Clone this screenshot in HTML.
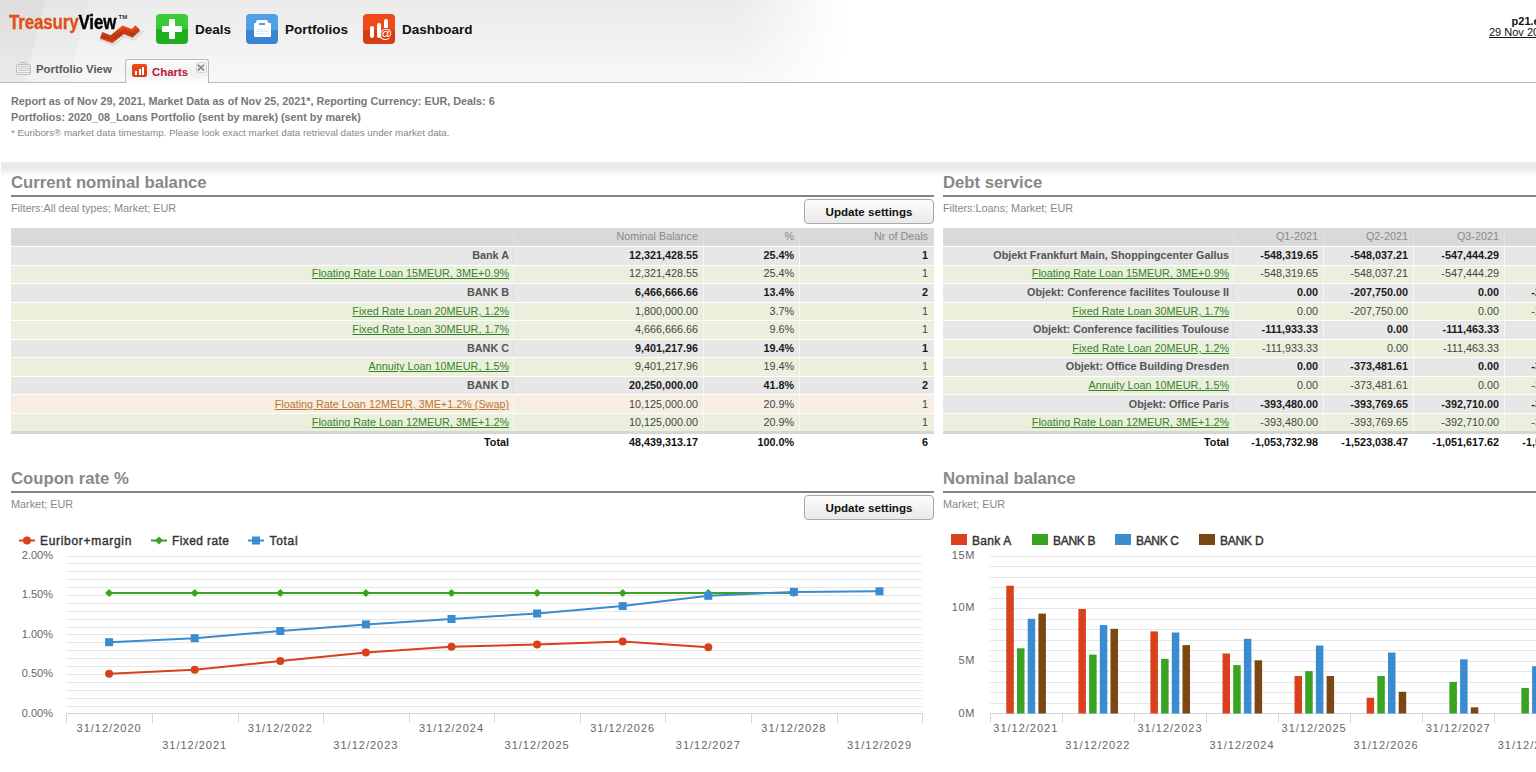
<!DOCTYPE html><html><head><meta charset="utf-8"><title>TreasuryView Charts</title><style>
*{margin:0;padding:0;box-sizing:border-box}
html,body{width:1536px;height:772px;overflow:hidden;background:#fff}
body{position:relative;font-family:"Liberation Sans",sans-serif;color:#333}
.a{position:absolute;white-space:nowrap}
#hdr{position:absolute;left:0;top:0;width:1536px;height:83px;background:#fff;overflow:hidden}
#hdrbg{position:absolute;left:0;top:0;width:900px;height:83px;
 background:linear-gradient(104deg,rgba(0,0,0,0.055) 0,rgba(0,0,0,0.055) 44px,rgba(0,0,0,0.025) 44px,rgba(0,0,0,0.025) 87px,rgba(0,0,0,0) 87px),linear-gradient(to bottom,#ebebeb 0%,#f1f1f1 50%,#f8f8f8 100%);
 -webkit-mask-image:linear-gradient(to right,#000 0%,#000 82%,rgba(0,0,0,0) 94%)}
#hdrline{position:absolute;left:0;top:82px;width:1536px;height:1px;background:#b9b9b9}
.nav{font-weight:bold;font-size:13.5px;color:#111;line-height:16px}
.ico{position:absolute;border-radius:4px;overflow:hidden}
.h2{font-size:16.7px;font-weight:bold;color:#888;line-height:20px}
.rule{position:absolute;height:2px;background:#838383}
.sub{font-size:10.85px;color:#888;line-height:13px}
.btn{position:absolute;border:1px solid #a9a9a9;border-radius:4px;background:linear-gradient(#fdfdfd,#e9e9e9);font-weight:bold;font-size:11.6px;color:#111;text-align:center}
table.t{position:absolute;border-collapse:collapse;table-layout:fixed;font-size:10.7px}
.t td{height:18.63px;padding:0 5px 0 0;text-align:right;border-bottom:1px solid #fff;border-right:1px solid #fff;line-height:12px;overflow:hidden;white-space:nowrap}
.t tr.hd td{background:#d9d9d9;color:#888;height:19px;border-right-color:#e2e2e2}
.t tr.g td{background:#e6e7e6;color:#222;font-weight:bold;border-right-color:#e6e7e6}
.t tr.g td.l{color:#555;border-right-color:#d6d6d6}
.t tr.l td{background:#ebf0dd;color:#444}
.t tr.s td{background:#f6eee3;color:#444}
.t tr.l td.l a{color:#3b8a2a;text-decoration:underline}
.t tr.s td.l a{color:#c07a2a;text-decoration:underline}
.t tr.tot td{background:#fff;color:#111;font-weight:bold;border-top:2px solid #d5d5d5;border-right-color:#fff}
.tc{text-align:right;font-size:10.8px;line-height:13px;overflow:visible}
.hdt{color:#8a8a8a;font-weight:normal}
.glab{color:#555;font-weight:bold}
.llab u{text-decoration:underline}
.gnum{color:#1a1a1a;font-weight:bold}
.lnum{color:#444}
.cl{font-size:11px;color:#666;line-height:13px}
.xl{font-size:11px;color:#666;letter-spacing:1px;line-height:13px}
.lg{font-size:12px;font-weight:normal;color:#333;line-height:14px;-webkit-text-stroke:0.4px #333}
</style></head><body>
<div id="hdr"><div id="hdrbg"></div>
<div class="a" style="left:9.3px;top:10.2px;font-size:20.3px;font-weight:bold;line-height:24px;transform:scaleX(0.83);transform-origin:0 0;letter-spacing:-0.1px;-webkit-text-stroke:0.45px"><span style="color:#e2501c;-webkit-text-stroke-color:#e2501c">Treasury</span><span style="color:#000;-webkit-text-stroke-color:#000">View</span></div>
<svg class="a" style="left:0;top:0" width="150" height="50" viewBox="0 0 150 50"><defs><linearGradient id="sw" x1="0" y1="0" x2="0" y2="1"><stop offset="0" stop-color="#f24e1c"/><stop offset="0.55" stop-color="#c23a16"/><stop offset="1" stop-color="#e4461a"/></linearGradient></defs><polygon points="101,40 113.4,45 125,36 133.7,39.8 142,32" fill="none" stroke="#cfcfcf" stroke-width="2" opacity="0.6"/><polygon points="102.3,32 110.6,35.2 122.6,25.6 131.6,28.9 135.6,25.3 140.3,30.5 132.7,37.8 124,34.1 112.4,43.2 99.9,38.5" fill="url(#sw)"/><path d="M101.5 36 L112 40 L123.5 30.5 L132.5 34 L138.5 28.5" fill="none" stroke="#8f2a10" stroke-width="2.2" opacity="0.35"/><text x="118.5" y="19" font-size="6" font-weight="bold" fill="#333" font-family="Liberation Sans">TM</text></svg>
<div class="ico" style="left:156px;top:14px;width:32px;height:30px;background:linear-gradient(#3bcc35 0%,#3bcc35 50%,#1fb01f 50%,#1fb01f 100%)"><div style="position:absolute;left:13px;top:5px;width:6px;height:20px;background:#fff;border-radius:1px"></div><div style="position:absolute;left:6px;top:12px;width:20px;height:6px;background:#fff;border-radius:1px"></div></div>
<div class="a nav" style="left:195px;top:22px">Deals</div>
<div class="ico" style="left:246px;top:14px;width:32px;height:30px;background:linear-gradient(#4f9ee8 0%,#4f9ee8 52%,#3a85d2 52%,#3a85d2 100%)"><div style="position:absolute;left:10px;top:6px;width:12px;height:6px;background:#fff;border-radius:2px 2px 0 0"></div><div style="position:absolute;left:13px;top:9px;width:6px;height:3px;background:#4f9ee8"></div><div style="position:absolute;left:8px;top:9px;width:17px;height:14px;background:#fff;border-radius:1px"></div><div style="position:absolute;left:13px;top:9px;width:6px;height:2px;background:#4f9ee8"></div><div style="position:absolute;left:10px;top:15px;width:12px;height:1px;background:#dde8f4"></div><div style="position:absolute;left:10px;top:17px;width:12px;height:1px;background:#dde8f4"></div><div style="position:absolute;left:10px;top:19px;width:12px;height:1px;background:#dde8f4"></div></div>
<div class="a nav" style="left:285px;top:22px">Portfolios</div>
<div class="ico" style="left:363px;top:14px;width:32px;height:30px;background:linear-gradient(#ee4a1c 0%,#ee4a1c 52%,#d63c16 52%,#d63c16 100%)"><div style="position:absolute;left:6.5px;top:12px;width:4.5px;height:11.5px;background:#fff;border-radius:2.5px"></div><div style="position:absolute;left:13.5px;top:8.5px;width:4.5px;height:15px;background:#fff;border-radius:2.5px"></div><div style="position:absolute;left:20.5px;top:5px;width:4.5px;height:8.5px;background:#fff;border-radius:2.5px 2.5px 0 0"></div><div style="position:absolute;left:16px;top:13px;font-size:13px;line-height:14px;color:#fff;font-family:'Liberation Sans'">@</div></div>
<div class="a nav" style="left:402px;top:22px">Dashboard</div>
<div class="a" style="left:1511.6px;top:14.7px;font-size:11px;font-weight:bold;color:#111;line-height:13px">p21.eu</div>
<div class="a" style="left:1489px;top:26px;font-size:11px;color:#111;line-height:13px;text-decoration:underline">29 Nov 2021</div>
<div class="a" style="left:20px;top:62px;width:7px;height:3px;border:1.5px solid #bdbdbd;border-bottom:none;border-radius:2px 2px 0 0"></div>
<div class="a" style="left:16px;top:64px;width:15px;height:11px;border:1.5px solid #bdbdbd;border-radius:2px;background:repeating-linear-gradient(#f2f2f2 0,#f2f2f2 1px,#c9c9c9 1px,#c9c9c9 2px);box-shadow:inset 1px 0 0 #f5f5f5"></div>
<div class="a" style="left:36px;top:63px;font-size:11.4px;font-weight:bold;color:#5a5a5a;line-height:13px">Portfolio View</div>
<div class="a" style="left:125px;top:59px;width:84px;height:25px;border:1px solid #b9b9b9;border-bottom:none;border-radius:3px 3px 0 0;background:linear-gradient(#fbfbfb,#f0f0f0 60%,#fff)"></div>
<div class="a" style="left:132px;top:64px;width:15px;height:13px;border-radius:2px;background:linear-gradient(#ee4a1c,#d63c16)"><div style="position:absolute;left:3px;top:7px;width:2px;height:4px;background:#fff"></div><div style="position:absolute;left:6.5px;top:5px;width:2px;height:6px;background:#fff"></div><div style="position:absolute;left:10px;top:2.5px;width:2px;height:8.5px;background:#fff"></div></div>
<div class="a" style="left:152px;top:65.5px;font-size:11.4px;font-weight:bold;color:#b8203a;line-height:13px">Charts</div>
<div class="a" style="left:195.5px;top:62px;width:11px;height:10.5px;border:1px solid #d0d0d0;border-radius:2.5px;background:#f3f3f3"></div>
<svg class="a" style="left:195px;top:62px" width="12" height="11"><path d="M3.2 3.2 L8.6 8 M8.6 3.2 L3.2 8" stroke="#8a8a8a" stroke-width="1.7" stroke-linecap="round"/></svg>
<div id="hdrline"></div><div class="a" style="left:126px;top:82px;width:82px;height:1px;background:#f6f6f6"></div>
</div>
<div class="a" style="left:11px;top:95px;font-size:10.8px;font-weight:bold;color:#777;line-height:13px">Report as of Nov 29, 2021, Market Data as of Nov 25, 2021*, Reporting Currency: EUR, Deals: 6</div>
<div class="a" style="left:11px;top:111px;font-size:10.8px;font-weight:bold;color:#777;line-height:13px">Portfolios: 2020_08_Loans Portfolio (sent by marek) (sent by marek)</div>
<div class="a" style="left:11px;top:126.5px;font-size:9.8px;color:#888;line-height:12px">* Euribors&#174; market data timestamp. Please look exact market data retrieval dates under market data.</div>
<div class="a" style="left:1px;top:161.5px;width:1535px;height:15px;background:linear-gradient(#ebebeb 0%,#e8e8e8 35%,rgba(255,255,255,0) 100%)"></div>
<div class="a h2" style="left:11px;top:172.8px">Current nominal balance</div>
<div class="rule" style="left:11px;top:195px;width:923px"></div>
<div class="a sub" style="left:11px;top:202px">Filters:All deal types; Market; EUR</div>
<div class="btn" style="left:804px;top:199px;width:130px;height:25px;line-height:23px">Update settings</div>
<div class="a h2" style="left:943px;top:172.8px">Debt service</div>
<div class="rule" style="left:943px;top:195px;width:600px"></div>
<div class="a sub" style="left:943px;top:202px">Filters:Loans; Market; EUR</div>
<div class="a h2" style="left:11px;top:468.8px">Coupon rate %</div>
<div class="rule" style="left:11px;top:491px;width:923px"></div>
<div class="a sub" style="left:11px;top:498px">Market; EUR</div>
<div class="btn" style="left:804px;top:495px;width:130px;height:25px;line-height:23px">Update settings</div>
<div class="a h2" style="left:943px;top:468.8px">Nominal balance</div>
<div class="rule" style="left:943px;top:491px;width:600px"></div>
<div class="a sub" style="left:943px;top:498px">Market; EUR</div>
<div class="a" style="left:11px;top:228px;width:923px;height:18px;background:#d9d9d9"></div>
<div class="a" style="left:513px;top:228px;width:1px;height:18px;background:#e1e1e1"></div>
<div class="a" style="left:703px;top:228px;width:1px;height:18px;background:#e1e1e1"></div>
<div class="a" style="left:799px;top:228px;width:1px;height:18px;background:#e1e1e1"></div>
<div class="a tc hdt" style="left:514px;width:184px;top:230px">Nominal Balance</div>
<div class="a tc hdt" style="left:704px;width:90px;top:230px">%</div>
<div class="a tc hdt" style="left:800px;width:128px;top:230px">Nr of Deals</div>
<div class="a" style="left:11px;top:247.00px;width:923px;height:17.53px;background:#e6e7e6"></div>
<div class="a" style="left:513px;top:247.00px;width:1px;height:17.53px;background:#d9dad9"></div>
<div class="a" style="left:703px;top:247.00px;width:1px;height:17.53px;background:#f7f7f7"></div>
<div class="a" style="left:799px;top:247.00px;width:1px;height:17.53px;background:#f7f7f7"></div>
<div class="a tc glab" style="left:11px;width:498px;top:248.60px">Bank A</div>
<div class="a tc gnum" style="left:514px;width:184px;top:248.60px">12,321,428.55</div>
<div class="a tc gnum" style="left:704px;width:90px;top:248.60px">25.4%</div>
<div class="a tc gnum" style="left:800px;width:128px;top:248.60px">1</div>
<div class="a" style="left:11px;top:265.53px;width:923px;height:17.53px;background:#ebf0dd"></div>
<div class="a" style="left:513px;top:265.53px;width:1px;height:17.53px;background:#f7f7f7"></div>
<div class="a" style="left:703px;top:265.53px;width:1px;height:17.53px;background:#f7f7f7"></div>
<div class="a" style="left:799px;top:265.53px;width:1px;height:17.53px;background:#f7f7f7"></div>
<div class="a tc llab" style="left:11px;width:498px;top:267.24px;color:#37822d"><u>Floating Rate Loan 15MEUR, 3ME+0.9%</u></div>
<div class="a tc lnum" style="left:514px;width:184px;top:267.24px">12,321,428.55</div>
<div class="a tc lnum" style="left:704px;width:90px;top:267.24px">25.4%</div>
<div class="a tc lnum" style="left:800px;width:128px;top:267.24px">1</div>
<div class="a" style="left:11px;top:284.06px;width:923px;height:17.53px;background:#e6e7e6"></div>
<div class="a" style="left:513px;top:284.06px;width:1px;height:17.53px;background:#d9dad9"></div>
<div class="a" style="left:703px;top:284.06px;width:1px;height:17.53px;background:#f7f7f7"></div>
<div class="a" style="left:799px;top:284.06px;width:1px;height:17.53px;background:#f7f7f7"></div>
<div class="a tc glab" style="left:11px;width:498px;top:285.88px">BANK B</div>
<div class="a tc gnum" style="left:514px;width:184px;top:285.88px">6,466,666.66</div>
<div class="a tc gnum" style="left:704px;width:90px;top:285.88px">13.4%</div>
<div class="a tc gnum" style="left:800px;width:128px;top:285.88px">2</div>
<div class="a" style="left:11px;top:302.59px;width:923px;height:17.53px;background:#ebf0dd"></div>
<div class="a" style="left:513px;top:302.59px;width:1px;height:17.53px;background:#f7f7f7"></div>
<div class="a" style="left:703px;top:302.59px;width:1px;height:17.53px;background:#f7f7f7"></div>
<div class="a" style="left:799px;top:302.59px;width:1px;height:17.53px;background:#f7f7f7"></div>
<div class="a tc llab" style="left:11px;width:498px;top:304.52px;color:#37822d"><u>Fixed Rate Loan 20MEUR, 1.2%</u></div>
<div class="a tc lnum" style="left:514px;width:184px;top:304.52px">1,800,000.00</div>
<div class="a tc lnum" style="left:704px;width:90px;top:304.52px">3.7%</div>
<div class="a tc lnum" style="left:800px;width:128px;top:304.52px">1</div>
<div class="a" style="left:11px;top:321.12px;width:923px;height:17.53px;background:#ebf0dd"></div>
<div class="a" style="left:513px;top:321.12px;width:1px;height:17.53px;background:#f7f7f7"></div>
<div class="a" style="left:703px;top:321.12px;width:1px;height:17.53px;background:#f7f7f7"></div>
<div class="a" style="left:799px;top:321.12px;width:1px;height:17.53px;background:#f7f7f7"></div>
<div class="a tc llab" style="left:11px;width:498px;top:323.16px;color:#37822d"><u>Fixed Rate Loan 30MEUR, 1.7%</u></div>
<div class="a tc lnum" style="left:514px;width:184px;top:323.16px">4,666,666.66</div>
<div class="a tc lnum" style="left:704px;width:90px;top:323.16px">9.6%</div>
<div class="a tc lnum" style="left:800px;width:128px;top:323.16px">1</div>
<div class="a" style="left:11px;top:339.65px;width:923px;height:17.53px;background:#e6e7e6"></div>
<div class="a" style="left:513px;top:339.65px;width:1px;height:17.53px;background:#d9dad9"></div>
<div class="a" style="left:703px;top:339.65px;width:1px;height:17.53px;background:#f7f7f7"></div>
<div class="a" style="left:799px;top:339.65px;width:1px;height:17.53px;background:#f7f7f7"></div>
<div class="a tc glab" style="left:11px;width:498px;top:341.80px">BANK C</div>
<div class="a tc gnum" style="left:514px;width:184px;top:341.80px">9,401,217.96</div>
<div class="a tc gnum" style="left:704px;width:90px;top:341.80px">19.4%</div>
<div class="a tc gnum" style="left:800px;width:128px;top:341.80px">1</div>
<div class="a" style="left:11px;top:358.18px;width:923px;height:17.53px;background:#ebf0dd"></div>
<div class="a" style="left:513px;top:358.18px;width:1px;height:17.53px;background:#f7f7f7"></div>
<div class="a" style="left:703px;top:358.18px;width:1px;height:17.53px;background:#f7f7f7"></div>
<div class="a" style="left:799px;top:358.18px;width:1px;height:17.53px;background:#f7f7f7"></div>
<div class="a tc llab" style="left:11px;width:498px;top:360.44px;color:#37822d"><u>Annuity Loan 10MEUR, 1.5%</u></div>
<div class="a tc lnum" style="left:514px;width:184px;top:360.44px">9,401,217.96</div>
<div class="a tc lnum" style="left:704px;width:90px;top:360.44px">19.4%</div>
<div class="a tc lnum" style="left:800px;width:128px;top:360.44px">1</div>
<div class="a" style="left:11px;top:376.71px;width:923px;height:17.53px;background:#e6e7e6"></div>
<div class="a" style="left:513px;top:376.71px;width:1px;height:17.53px;background:#d9dad9"></div>
<div class="a" style="left:703px;top:376.71px;width:1px;height:17.53px;background:#f7f7f7"></div>
<div class="a" style="left:799px;top:376.71px;width:1px;height:17.53px;background:#f7f7f7"></div>
<div class="a tc glab" style="left:11px;width:498px;top:379.08px">BANK D</div>
<div class="a tc gnum" style="left:514px;width:184px;top:379.08px">20,250,000.00</div>
<div class="a tc gnum" style="left:704px;width:90px;top:379.08px">41.8%</div>
<div class="a tc gnum" style="left:800px;width:128px;top:379.08px">2</div>
<div class="a" style="left:11px;top:395.24px;width:923px;height:17.53px;background:#f6eee3"></div>
<div class="a" style="left:513px;top:395.24px;width:1px;height:17.53px;background:#f7f7f7"></div>
<div class="a" style="left:703px;top:395.24px;width:1px;height:17.53px;background:#f7f7f7"></div>
<div class="a" style="left:799px;top:395.24px;width:1px;height:17.53px;background:#f7f7f7"></div>
<div class="a tc llab" style="left:11px;width:498px;top:397.72px;color:#bb7630"><u>Floating Rate Loan 12MEUR, 3ME+1.2% (Swap)</u></div>
<div class="a tc lnum" style="left:514px;width:184px;top:397.72px">10,125,000.00</div>
<div class="a tc lnum" style="left:704px;width:90px;top:397.72px">20.9%</div>
<div class="a tc lnum" style="left:800px;width:128px;top:397.72px">1</div>
<div class="a" style="left:11px;top:413.77px;width:923px;height:17.53px;background:#ebf0dd"></div>
<div class="a" style="left:513px;top:413.77px;width:1px;height:17.53px;background:#f7f7f7"></div>
<div class="a" style="left:703px;top:413.77px;width:1px;height:17.53px;background:#f7f7f7"></div>
<div class="a" style="left:799px;top:413.77px;width:1px;height:17.53px;background:#f7f7f7"></div>
<div class="a tc llab" style="left:11px;width:498px;top:416.36px;color:#37822d"><u>Floating Rate Loan 12MEUR, 3ME+1.2%</u></div>
<div class="a tc lnum" style="left:514px;width:184px;top:416.36px">10,125,000.00</div>
<div class="a tc lnum" style="left:704px;width:90px;top:416.36px">20.9%</div>
<div class="a tc lnum" style="left:800px;width:128px;top:416.36px">1</div>
<div class="a" style="left:11px;top:431.30px;width:923px;height:2.5px;background:#d6d6d6"></div>
<div class="a tc gnum" style="left:11px;width:498px;top:436.30px;color:#111">Total</div>
<div class="a tc gnum" style="left:514px;width:184px;top:436.30px;color:#111">48,439,313.17</div>
<div class="a tc gnum" style="left:704px;width:90px;top:436.30px;color:#111">100.0%</div>
<div class="a tc gnum" style="left:800px;width:128px;top:436.30px;color:#111">6</div>
<div class="a" style="left:943px;top:228px;width:652px;height:18px;background:#d9d9d9"></div>
<div class="a" style="left:1233px;top:228px;width:1px;height:18px;background:#e1e1e1"></div>
<div class="a" style="left:1323px;top:228px;width:1px;height:18px;background:#e1e1e1"></div>
<div class="a" style="left:1413px;top:228px;width:1px;height:18px;background:#e1e1e1"></div>
<div class="a" style="left:1504px;top:228px;width:1px;height:18px;background:#e1e1e1"></div>
<div class="a tc hdt" style="left:1234px;width:84px;top:230px">Q1-2021</div>
<div class="a tc hdt" style="left:1324px;width:84px;top:230px">Q2-2021</div>
<div class="a tc hdt" style="left:1414px;width:85px;top:230px">Q3-2021</div>
<div class="a tc hdt" style="left:1505px;width:84px;top:230px">Q4-2021</div>
<div class="a" style="left:943px;top:247.00px;width:652px;height:17.53px;background:#e6e7e6"></div>
<div class="a" style="left:1233px;top:247.00px;width:1px;height:17.53px;background:#d9dad9"></div>
<div class="a" style="left:1323px;top:247.00px;width:1px;height:17.53px;background:#f7f7f7"></div>
<div class="a" style="left:1413px;top:247.00px;width:1px;height:17.53px;background:#f7f7f7"></div>
<div class="a" style="left:1504px;top:247.00px;width:1px;height:17.53px;background:#f7f7f7"></div>
<div class="a tc glab" style="left:943px;width:286px;top:248.60px">Objekt Frankfurt Main, Shoppingcenter Gallus</div>
<div class="a tc gnum" style="left:1234px;width:84px;top:248.60px">-548,319.65</div>
<div class="a tc gnum" style="left:1324px;width:84px;top:248.60px">-548,037.21</div>
<div class="a tc gnum" style="left:1414px;width:85px;top:248.60px">-547,444.29</div>
<div class="a" style="left:943px;top:265.53px;width:652px;height:17.53px;background:#ebf0dd"></div>
<div class="a" style="left:1233px;top:265.53px;width:1px;height:17.53px;background:#f7f7f7"></div>
<div class="a" style="left:1323px;top:265.53px;width:1px;height:17.53px;background:#f7f7f7"></div>
<div class="a" style="left:1413px;top:265.53px;width:1px;height:17.53px;background:#f7f7f7"></div>
<div class="a" style="left:1504px;top:265.53px;width:1px;height:17.53px;background:#f7f7f7"></div>
<div class="a tc llab" style="left:943px;width:286px;top:267.24px;color:#37822d"><u>Floating Rate Loan 15MEUR, 3ME+0.9%</u></div>
<div class="a tc lnum" style="left:1234px;width:84px;top:267.24px">-548,319.65</div>
<div class="a tc lnum" style="left:1324px;width:84px;top:267.24px">-548,037.21</div>
<div class="a tc lnum" style="left:1414px;width:85px;top:267.24px">-547,444.29</div>
<div class="a" style="left:943px;top:284.06px;width:652px;height:17.53px;background:#e6e7e6"></div>
<div class="a" style="left:1233px;top:284.06px;width:1px;height:17.53px;background:#d9dad9"></div>
<div class="a" style="left:1323px;top:284.06px;width:1px;height:17.53px;background:#f7f7f7"></div>
<div class="a" style="left:1413px;top:284.06px;width:1px;height:17.53px;background:#f7f7f7"></div>
<div class="a" style="left:1504px;top:284.06px;width:1px;height:17.53px;background:#f7f7f7"></div>
<div class="a tc glab" style="left:943px;width:286px;top:285.88px">Objekt: Conference facilites Toulouse II</div>
<div class="a tc gnum" style="left:1234px;width:84px;top:285.88px">0.00</div>
<div class="a tc gnum" style="left:1324px;width:84px;top:285.88px">-207,750.00</div>
<div class="a tc gnum" style="left:1414px;width:85px;top:285.88px">0.00</div>
<div class="a tc gnum" style="left:1505px;width:84px;top:285.88px">-207,750.00</div>
<div class="a" style="left:943px;top:302.59px;width:652px;height:17.53px;background:#ebf0dd"></div>
<div class="a" style="left:1233px;top:302.59px;width:1px;height:17.53px;background:#f7f7f7"></div>
<div class="a" style="left:1323px;top:302.59px;width:1px;height:17.53px;background:#f7f7f7"></div>
<div class="a" style="left:1413px;top:302.59px;width:1px;height:17.53px;background:#f7f7f7"></div>
<div class="a" style="left:1504px;top:302.59px;width:1px;height:17.53px;background:#f7f7f7"></div>
<div class="a tc llab" style="left:943px;width:286px;top:304.52px;color:#37822d"><u>Fixed Rate Loan 30MEUR, 1.7%</u></div>
<div class="a tc lnum" style="left:1234px;width:84px;top:304.52px">0.00</div>
<div class="a tc lnum" style="left:1324px;width:84px;top:304.52px">-207,750.00</div>
<div class="a tc lnum" style="left:1414px;width:85px;top:304.52px">0.00</div>
<div class="a tc lnum" style="left:1505px;width:84px;top:304.52px">-207,750.00</div>
<div class="a" style="left:943px;top:321.12px;width:652px;height:17.53px;background:#e6e7e6"></div>
<div class="a" style="left:1233px;top:321.12px;width:1px;height:17.53px;background:#d9dad9"></div>
<div class="a" style="left:1323px;top:321.12px;width:1px;height:17.53px;background:#f7f7f7"></div>
<div class="a" style="left:1413px;top:321.12px;width:1px;height:17.53px;background:#f7f7f7"></div>
<div class="a" style="left:1504px;top:321.12px;width:1px;height:17.53px;background:#f7f7f7"></div>
<div class="a tc glab" style="left:943px;width:286px;top:323.16px">Objekt: Conference facilities Toulouse</div>
<div class="a tc gnum" style="left:1234px;width:84px;top:323.16px">-111,933.33</div>
<div class="a tc gnum" style="left:1324px;width:84px;top:323.16px">0.00</div>
<div class="a tc gnum" style="left:1414px;width:85px;top:323.16px">-111,463.33</div>
<div class="a" style="left:943px;top:339.65px;width:652px;height:17.53px;background:#ebf0dd"></div>
<div class="a" style="left:1233px;top:339.65px;width:1px;height:17.53px;background:#f7f7f7"></div>
<div class="a" style="left:1323px;top:339.65px;width:1px;height:17.53px;background:#f7f7f7"></div>
<div class="a" style="left:1413px;top:339.65px;width:1px;height:17.53px;background:#f7f7f7"></div>
<div class="a" style="left:1504px;top:339.65px;width:1px;height:17.53px;background:#f7f7f7"></div>
<div class="a tc llab" style="left:943px;width:286px;top:341.80px;color:#37822d"><u>Fixed Rate Loan 20MEUR, 1.2%</u></div>
<div class="a tc lnum" style="left:1234px;width:84px;top:341.80px">-111,933.33</div>
<div class="a tc lnum" style="left:1324px;width:84px;top:341.80px">0.00</div>
<div class="a tc lnum" style="left:1414px;width:85px;top:341.80px">-111,463.33</div>
<div class="a" style="left:943px;top:358.18px;width:652px;height:17.53px;background:#e6e7e6"></div>
<div class="a" style="left:1233px;top:358.18px;width:1px;height:17.53px;background:#d9dad9"></div>
<div class="a" style="left:1323px;top:358.18px;width:1px;height:17.53px;background:#f7f7f7"></div>
<div class="a" style="left:1413px;top:358.18px;width:1px;height:17.53px;background:#f7f7f7"></div>
<div class="a" style="left:1504px;top:358.18px;width:1px;height:17.53px;background:#f7f7f7"></div>
<div class="a tc glab" style="left:943px;width:286px;top:360.44px">Objekt: Office Building Dresden</div>
<div class="a tc gnum" style="left:1234px;width:84px;top:360.44px">0.00</div>
<div class="a tc gnum" style="left:1324px;width:84px;top:360.44px">-373,481.61</div>
<div class="a tc gnum" style="left:1414px;width:85px;top:360.44px">0.00</div>
<div class="a tc gnum" style="left:1505px;width:84px;top:360.44px">-373,481.61</div>
<div class="a" style="left:943px;top:376.71px;width:652px;height:17.53px;background:#ebf0dd"></div>
<div class="a" style="left:1233px;top:376.71px;width:1px;height:17.53px;background:#f7f7f7"></div>
<div class="a" style="left:1323px;top:376.71px;width:1px;height:17.53px;background:#f7f7f7"></div>
<div class="a" style="left:1413px;top:376.71px;width:1px;height:17.53px;background:#f7f7f7"></div>
<div class="a" style="left:1504px;top:376.71px;width:1px;height:17.53px;background:#f7f7f7"></div>
<div class="a tc llab" style="left:943px;width:286px;top:379.08px;color:#37822d"><u>Annuity Loan 10MEUR, 1.5%</u></div>
<div class="a tc lnum" style="left:1234px;width:84px;top:379.08px">0.00</div>
<div class="a tc lnum" style="left:1324px;width:84px;top:379.08px">-373,481.61</div>
<div class="a tc lnum" style="left:1414px;width:85px;top:379.08px">0.00</div>
<div class="a tc lnum" style="left:1505px;width:84px;top:379.08px">-373,481.61</div>
<div class="a" style="left:943px;top:395.24px;width:652px;height:17.53px;background:#e6e7e6"></div>
<div class="a" style="left:1233px;top:395.24px;width:1px;height:17.53px;background:#d9dad9"></div>
<div class="a" style="left:1323px;top:395.24px;width:1px;height:17.53px;background:#f7f7f7"></div>
<div class="a" style="left:1413px;top:395.24px;width:1px;height:17.53px;background:#f7f7f7"></div>
<div class="a" style="left:1504px;top:395.24px;width:1px;height:17.53px;background:#f7f7f7"></div>
<div class="a tc glab" style="left:943px;width:286px;top:397.72px">Objekt: Office Paris</div>
<div class="a tc gnum" style="left:1234px;width:84px;top:397.72px">-393,480.00</div>
<div class="a tc gnum" style="left:1324px;width:84px;top:397.72px">-393,769.65</div>
<div class="a tc gnum" style="left:1414px;width:85px;top:397.72px">-392,710.00</div>
<div class="a tc gnum" style="left:1505px;width:84px;top:397.72px">-392,710.00</div>
<div class="a" style="left:943px;top:413.77px;width:652px;height:17.53px;background:#ebf0dd"></div>
<div class="a" style="left:1233px;top:413.77px;width:1px;height:17.53px;background:#f7f7f7"></div>
<div class="a" style="left:1323px;top:413.77px;width:1px;height:17.53px;background:#f7f7f7"></div>
<div class="a" style="left:1413px;top:413.77px;width:1px;height:17.53px;background:#f7f7f7"></div>
<div class="a" style="left:1504px;top:413.77px;width:1px;height:17.53px;background:#f7f7f7"></div>
<div class="a tc llab" style="left:943px;width:286px;top:416.36px;color:#37822d"><u>Floating Rate Loan 12MEUR, 3ME+1.2%</u></div>
<div class="a tc lnum" style="left:1234px;width:84px;top:416.36px">-393,480.00</div>
<div class="a tc lnum" style="left:1324px;width:84px;top:416.36px">-393,769.65</div>
<div class="a tc lnum" style="left:1414px;width:85px;top:416.36px">-392,710.00</div>
<div class="a tc lnum" style="left:1505px;width:84px;top:416.36px">-392,710.00</div>
<div class="a" style="left:943px;top:431.30px;width:652px;height:2.5px;background:#d6d6d6"></div>
<div class="a tc gnum" style="left:943px;width:286px;top:436.30px;color:#111">Total</div>
<div class="a tc gnum" style="left:1234px;width:84px;top:436.30px;color:#111">-1,053,732.98</div>
<div class="a tc gnum" style="left:1324px;width:84px;top:436.30px;color:#111">-1,523,038.47</div>
<div class="a tc gnum" style="left:1414px;width:85px;top:436.30px;color:#111">-1,051,617.62</div>
<div class="a tc gnum" style="left:1505px;width:84px;top:436.30px;color:#111">-1,523,038.47</div>
<svg class="a" style="left:0;top:520px" width="935" height="252" viewBox="0 520 935 252"><line x1="66" x2="922" y1="706.5" y2="706.5" stroke="#e6e6e6" stroke-width="1"/><line x1="66" x2="922" y1="698.5" y2="698.5" stroke="#e6e6e6" stroke-width="1"/><line x1="66" x2="922" y1="690.5" y2="690.5" stroke="#e6e6e6" stroke-width="1"/><line x1="66" x2="922" y1="682.5" y2="682.5" stroke="#e6e6e6" stroke-width="1"/><line x1="66" x2="922" y1="674.5" y2="674.5" stroke="#e6e6e6" stroke-width="1"/><line x1="66" x2="922" y1="666.5" y2="666.5" stroke="#e6e6e6" stroke-width="1"/><line x1="66" x2="922" y1="658.5" y2="658.5" stroke="#e6e6e6" stroke-width="1"/><line x1="66" x2="922" y1="650.5" y2="650.5" stroke="#e6e6e6" stroke-width="1"/><line x1="66" x2="922" y1="642.5" y2="642.5" stroke="#e6e6e6" stroke-width="1"/><line x1="66" x2="922" y1="634.5" y2="634.5" stroke="#e6e6e6" stroke-width="1"/><line x1="66" x2="922" y1="627.5" y2="627.5" stroke="#e6e6e6" stroke-width="1"/><line x1="66" x2="922" y1="619.5" y2="619.5" stroke="#e6e6e6" stroke-width="1"/><line x1="66" x2="922" y1="611.5" y2="611.5" stroke="#e6e6e6" stroke-width="1"/><line x1="66" x2="922" y1="603.5" y2="603.5" stroke="#e6e6e6" stroke-width="1"/><line x1="66" x2="922" y1="595.5" y2="595.5" stroke="#e6e6e6" stroke-width="1"/><line x1="66" x2="922" y1="587.5" y2="587.5" stroke="#e6e6e6" stroke-width="1"/><line x1="66" x2="922" y1="579.5" y2="579.5" stroke="#e6e6e6" stroke-width="1"/><line x1="66" x2="922" y1="571.5" y2="571.5" stroke="#e6e6e6" stroke-width="1"/><line x1="66" x2="922" y1="563.5" y2="563.5" stroke="#e6e6e6" stroke-width="1"/><line x1="66" x2="922" y1="556.5" y2="556.5" stroke="#e6e6e6" stroke-width="1"/><line x1="66.3" x2="922.3" y1="713.5" y2="713.5" stroke="#ccd6eb" stroke-width="1"/><line x1="66.5" x2="66.5" y1="713.5" y2="723" stroke="#ccd6eb" stroke-width="1"/><line x1="152.5" x2="152.5" y1="713.5" y2="723" stroke="#ccd6eb" stroke-width="1"/><line x1="238.5" x2="238.5" y1="713.5" y2="723" stroke="#ccd6eb" stroke-width="1"/><line x1="323.5" x2="323.5" y1="713.5" y2="723" stroke="#ccd6eb" stroke-width="1"/><line x1="409.5" x2="409.5" y1="713.5" y2="723" stroke="#ccd6eb" stroke-width="1"/><line x1="494.5" x2="494.5" y1="713.5" y2="723" stroke="#ccd6eb" stroke-width="1"/><line x1="580.5" x2="580.5" y1="713.5" y2="723" stroke="#ccd6eb" stroke-width="1"/><line x1="665.5" x2="665.5" y1="713.5" y2="723" stroke="#ccd6eb" stroke-width="1"/><line x1="751.5" x2="751.5" y1="713.5" y2="723" stroke="#ccd6eb" stroke-width="1"/><line x1="837.5" x2="837.5" y1="713.5" y2="723" stroke="#ccd6eb" stroke-width="1"/><line x1="922.5" x2="922.5" y1="713.5" y2="723" stroke="#ccd6eb" stroke-width="1"/></svg>
<div class="a cl" style="right:1483px;top:706.5px">0.00%</div>
<div class="a cl" style="right:1483px;top:667.0px">0.50%</div>
<div class="a cl" style="right:1483px;top:627.5px">1.00%</div>
<div class="a cl" style="right:1483px;top:588.0px">1.50%</div>
<div class="a cl" style="right:1483px;top:548.5px">2.00%</div>
<div class="a xl" style="left:69.1px;width:80px;text-align:center;top:722.0px">31/12/2020</div>
<div class="a xl" style="left:154.7px;width:80px;text-align:center;top:738.5px">31/12/2021</div>
<div class="a xl" style="left:240.3px;width:80px;text-align:center;top:722.0px">31/12/2022</div>
<div class="a xl" style="left:325.9px;width:80px;text-align:center;top:738.5px">31/12/2023</div>
<div class="a xl" style="left:411.5px;width:80px;text-align:center;top:722.0px">31/12/2024</div>
<div class="a xl" style="left:497.1px;width:80px;text-align:center;top:738.5px">31/12/2025</div>
<div class="a xl" style="left:582.7px;width:80px;text-align:center;top:722.0px">31/12/2026</div>
<div class="a xl" style="left:668.3px;width:80px;text-align:center;top:738.5px">31/12/2027</div>
<div class="a xl" style="left:753.9px;width:80px;text-align:center;top:722.0px">31/12/2028</div>
<div class="a xl" style="left:839.5px;width:80px;text-align:center;top:738.5px">31/12/2029</div>
<svg class="a" style="left:0;top:520px" width="935" height="252" viewBox="0 520 935 252"><path d="M109.1 593.0 L194.7 593.0 L280.3 593.0 L365.9 593.0 L451.5 593.0 L537.1 593.0 L622.7 593.0 L708.3 593.0 L793.9 593.0" fill="none" stroke="#3aa324" stroke-width="2" stroke-linejoin="round"/><path d="M109.1 642.2 L194.7 638.2 L280.3 631.0 L365.9 624.4 L451.5 619.0 L537.1 613.5 L622.7 606.1 L708.3 595.8 L793.9 591.9 L879.5 591.3" fill="none" stroke="#3b8bd0" stroke-width="2" stroke-linejoin="round"/><path d="M109.1 673.7 L194.7 669.7 L280.3 661.1 L365.9 652.5 L451.5 646.7 L537.1 644.4 L622.7 641.5 L708.3 647.3" fill="none" stroke="#d9401c" stroke-width="2" stroke-linejoin="round"/><path d="M109.1 589.0 L113.1 593.0 L109.1 597.0 L105.1 593.0Z" fill="#3aa324"/><path d="M194.7 589.0 L198.7 593.0 L194.7 597.0 L190.7 593.0Z" fill="#3aa324"/><path d="M280.3 589.0 L284.3 593.0 L280.3 597.0 L276.3 593.0Z" fill="#3aa324"/><path d="M365.9 589.0 L369.9 593.0 L365.9 597.0 L361.9 593.0Z" fill="#3aa324"/><path d="M451.5 589.0 L455.5 593.0 L451.5 597.0 L447.5 593.0Z" fill="#3aa324"/><path d="M537.1 589.0 L541.1 593.0 L537.1 597.0 L533.1 593.0Z" fill="#3aa324"/><path d="M622.7 589.0 L626.7 593.0 L622.7 597.0 L618.7 593.0Z" fill="#3aa324"/><path d="M708.3 589.0 L712.3 593.0 L708.3 597.0 L704.3 593.0Z" fill="#3aa324"/><path d="M793.9 589.0 L797.9 593.0 L793.9 597.0 L789.9 593.0Z" fill="#3aa324"/><rect x="105.1" y="638.2" width="8" height="8" fill="#3b8bd0"/><rect x="190.7" y="634.2" width="8" height="8" fill="#3b8bd0"/><rect x="276.3" y="627.0" width="8" height="8" fill="#3b8bd0"/><rect x="361.9" y="620.4" width="8" height="8" fill="#3b8bd0"/><rect x="447.5" y="615.0" width="8" height="8" fill="#3b8bd0"/><rect x="533.1" y="609.5" width="8" height="8" fill="#3b8bd0"/><rect x="618.7" y="602.1" width="8" height="8" fill="#3b8bd0"/><rect x="704.3" y="591.8" width="8" height="8" fill="#3b8bd0"/><rect x="789.9" y="587.9" width="8" height="8" fill="#3b8bd0"/><rect x="875.5" y="587.3" width="8" height="8" fill="#3b8bd0"/><circle cx="109.1" cy="673.7" r="4" fill="#d9401c"/><circle cx="194.7" cy="669.7" r="4" fill="#d9401c"/><circle cx="280.3" cy="661.1" r="4" fill="#d9401c"/><circle cx="365.9" cy="652.5" r="4" fill="#d9401c"/><circle cx="451.5" cy="646.7" r="4" fill="#d9401c"/><circle cx="537.1" cy="644.4" r="4" fill="#d9401c"/><circle cx="622.7" cy="641.5" r="4" fill="#d9401c"/><circle cx="708.3" cy="647.3" r="4" fill="#d9401c"/><line x1="19" x2="35" y1="540.5" y2="540.5" stroke="#d9401c" stroke-width="2"/><circle cx="27" cy="540.5" r="4" fill="#d9401c"/><line x1="151" x2="167" y1="540.5" y2="540.5" stroke="#3aa324" stroke-width="2"/><path d="M159 536.5 L163 540.5 L159 544.5 L155 540.5Z" fill="#3aa324"/><line x1="248" x2="264" y1="540.5" y2="540.5" stroke="#3b8bd0" stroke-width="2"/><rect x="252" y="536.5" width="8" height="8" fill="#3b8bd0"/></svg>
<div class="a lg" style="left:40px;top:533.7px;letter-spacing:0.69px">Euribor+margin</div>
<div class="a lg" style="left:172px;top:533.7px;letter-spacing:0.39px">Fixed rate</div>
<div class="a lg" style="left:269.5px;top:533.7px;letter-spacing:0.7px">Total</div>
<svg class="a" style="left:935px;top:520px" width="601" height="252" viewBox="935 520 601 252"><line x1="990" x2="1536" y1="703.5" y2="703.5" stroke="#e6e6e6" stroke-width="1"/><line x1="990" x2="1536" y1="692.5" y2="692.5" stroke="#e6e6e6" stroke-width="1"/><line x1="990" x2="1536" y1="682.5" y2="682.5" stroke="#e6e6e6" stroke-width="1"/><line x1="990" x2="1536" y1="671.5" y2="671.5" stroke="#e6e6e6" stroke-width="1"/><line x1="990" x2="1536" y1="661.5" y2="661.5" stroke="#e6e6e6" stroke-width="1"/><line x1="990" x2="1536" y1="650.5" y2="650.5" stroke="#e6e6e6" stroke-width="1"/><line x1="990" x2="1536" y1="640.5" y2="640.5" stroke="#e6e6e6" stroke-width="1"/><line x1="990" x2="1536" y1="629.5" y2="629.5" stroke="#e6e6e6" stroke-width="1"/><line x1="990" x2="1536" y1="619.5" y2="619.5" stroke="#e6e6e6" stroke-width="1"/><line x1="990" x2="1536" y1="608.5" y2="608.5" stroke="#e6e6e6" stroke-width="1"/><line x1="990" x2="1536" y1="598.5" y2="598.5" stroke="#e6e6e6" stroke-width="1"/><line x1="990" x2="1536" y1="587.5" y2="587.5" stroke="#e6e6e6" stroke-width="1"/><line x1="990" x2="1536" y1="577.5" y2="577.5" stroke="#e6e6e6" stroke-width="1"/><line x1="990" x2="1536" y1="566.5" y2="566.5" stroke="#e6e6e6" stroke-width="1"/><line x1="990" x2="1536" y1="556.5" y2="556.5" stroke="#e6e6e6" stroke-width="1"/><line x1="989.8" x2="1536" y1="713.5" y2="713.5" stroke="#ccd6eb" stroke-width="1"/><line x1="990.5" x2="990.5" y1="713.5" y2="723" stroke="#ccd6eb" stroke-width="1"/><line x1="1062.5" x2="1062.5" y1="713.5" y2="723" stroke="#ccd6eb" stroke-width="1"/><line x1="1134.5" x2="1134.5" y1="713.5" y2="723" stroke="#ccd6eb" stroke-width="1"/><line x1="1206.5" x2="1206.5" y1="713.5" y2="723" stroke="#ccd6eb" stroke-width="1"/><line x1="1278.5" x2="1278.5" y1="713.5" y2="723" stroke="#ccd6eb" stroke-width="1"/><line x1="1350.5" x2="1350.5" y1="713.5" y2="723" stroke="#ccd6eb" stroke-width="1"/><line x1="1422.5" x2="1422.5" y1="713.5" y2="723" stroke="#ccd6eb" stroke-width="1"/><line x1="1494.5" x2="1494.5" y1="713.5" y2="723" stroke="#ccd6eb" stroke-width="1"/><line x1="1566.5" x2="1566.5" y1="713.5" y2="723" stroke="#ccd6eb" stroke-width="1"/><rect x="1006.3" y="585.7" width="7.5" height="127.8" fill="#d9401c"/><rect x="1078.4" y="609.0" width="7.5" height="104.5" fill="#d9401c"/><rect x="1150.4" y="631.4" width="7.5" height="82.1" fill="#d9401c"/><rect x="1222.5" y="653.5" width="7.5" height="60.0" fill="#d9401c"/><rect x="1294.5" y="676.0" width="7.5" height="37.5" fill="#d9401c"/><rect x="1366.6" y="697.7" width="7.5" height="15.8" fill="#d9401c"/><rect x="1017.0" y="648.3" width="7.5" height="65.2" fill="#3aa324"/><rect x="1089.1" y="654.6" width="7.5" height="58.9" fill="#3aa324"/><rect x="1161.1" y="658.8" width="7.5" height="54.7" fill="#3aa324"/><rect x="1233.2" y="665.1" width="7.5" height="48.4" fill="#3aa324"/><rect x="1305.2" y="671.1" width="7.5" height="42.4" fill="#3aa324"/><rect x="1377.3" y="676.0" width="7.5" height="37.5" fill="#3aa324"/><rect x="1449.4" y="681.9" width="7.5" height="31.6" fill="#3aa324"/><rect x="1521.4" y="687.9" width="7.5" height="25.6" fill="#3aa324"/><rect x="1027.7" y="618.8" width="7.5" height="94.7" fill="#3b8bd0"/><rect x="1099.8" y="625.1" width="7.5" height="88.4" fill="#3b8bd0"/><rect x="1171.8" y="632.5" width="7.5" height="81.0" fill="#3b8bd0"/><rect x="1243.9" y="638.8" width="7.5" height="74.7" fill="#3b8bd0"/><rect x="1315.9" y="645.5" width="7.5" height="68.0" fill="#3b8bd0"/><rect x="1388.0" y="652.5" width="7.5" height="61.0" fill="#3b8bd0"/><rect x="1460.1" y="659.3" width="7.5" height="54.2" fill="#3b8bd0"/><rect x="1532.1" y="666.2" width="7.5" height="47.3" fill="#3b8bd0"/><rect x="1038.4" y="613.6" width="7.5" height="99.9" fill="#7b4712"/><rect x="1110.5" y="628.8" width="7.5" height="84.7" fill="#7b4712"/><rect x="1182.5" y="645.1" width="7.5" height="68.4" fill="#7b4712"/><rect x="1254.6" y="660.3" width="7.5" height="53.2" fill="#7b4712"/><rect x="1326.6" y="676.0" width="7.5" height="37.5" fill="#7b4712"/><rect x="1398.7" y="691.8" width="7.5" height="21.7" fill="#7b4712"/><rect x="1470.8" y="707.3" width="7.5" height="6.2" fill="#7b4712"/><rect x="951" y="534" width="16" height="11" fill="#d9401c"/><rect x="1032" y="534" width="16" height="11" fill="#3aa324"/><rect x="1115" y="534" width="16" height="11" fill="#3b8bd0"/><rect x="1199" y="534" width="16" height="11" fill="#7b4712"/></svg>
<div class="a lg" style="left:972px;top:533.7px;letter-spacing:0.27px">Bank A</div>
<div class="a lg" style="left:1053px;top:533.7px;letter-spacing:-0.3px">BANK B</div>
<div class="a lg" style="left:1136px;top:533.7px;letter-spacing:-0.34px">BANK C</div>
<div class="a lg" style="left:1220px;top:533.7px;letter-spacing:-0.2px">BANK D</div>
<div class="a cl" style="right:561px;top:706.5px;letter-spacing:0.6px">0M</div>
<div class="a cl" style="right:561px;top:653.9px;letter-spacing:0.6px">5M</div>
<div class="a cl" style="right:561px;top:601.3px;letter-spacing:0.6px">10M</div>
<div class="a cl" style="right:561px;top:548.7px;letter-spacing:0.6px">15M</div>
<div class="a xl" style="left:985.8px;width:80px;text-align:center;top:722.0px">31/12/2021</div>
<div class="a xl" style="left:1057.9px;width:80px;text-align:center;top:738.5px">31/12/2022</div>
<div class="a xl" style="left:1130.0px;width:80px;text-align:center;top:722.0px">31/12/2023</div>
<div class="a xl" style="left:1202.0px;width:80px;text-align:center;top:738.5px">31/12/2024</div>
<div class="a xl" style="left:1274.1px;width:80px;text-align:center;top:722.0px">31/12/2025</div>
<div class="a xl" style="left:1346.1px;width:80px;text-align:center;top:738.5px">31/12/2026</div>
<div class="a xl" style="left:1418.2px;width:80px;text-align:center;top:722.0px">31/12/2027</div>
<div class="a xl" style="left:1490.2px;width:80px;text-align:center;top:738.5px">31/12/2028</div>
</body></html>
